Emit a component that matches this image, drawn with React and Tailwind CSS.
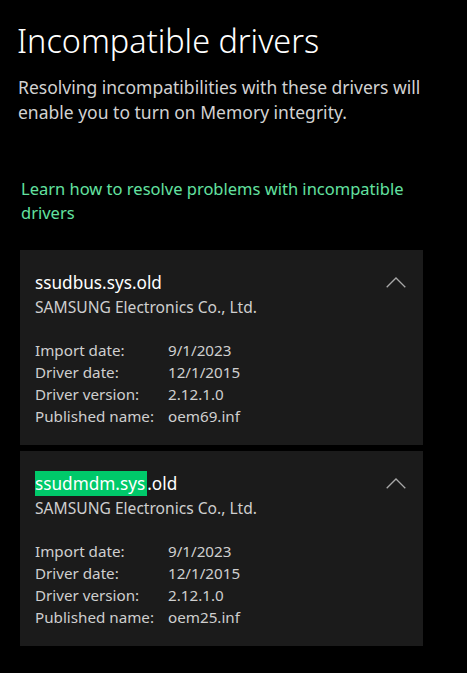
const drivers = [
  {
    file: 'ssudbus.sys.old',
    vendor: 'SAMSUNG Electronics Co., Ltd.',
    rows: [
      ['Import date:', '9/1/2023'],
      ['Driver date:', '12/1/2015'],
      ['Driver version:', '2.12.1.0'],
      ['Published name:', 'oem69.inf'],
    ],
  },
  {
    file: 'ssudmdm.sys.old',
    highlight: 'ssudmdm.sys',
    vendor: 'SAMSUNG Electronics Co., Ltd.',
    rows: [
      ['Import date:', '9/1/2023'],
      ['Driver date:', '12/1/2015'],
      ['Driver version:', '2.12.1.0'],
      ['Published name:', 'oem25.inf'],
    ],
  },
];

const Chevron = () => (
  <svg width="20" height="11" viewBox="0 0 20 11" fill="none" className="shrink-0">
    <path d="M0.7 10.3 L10 1 L19.3 10.3" stroke="#a8a8a8" strokeWidth="1.3" />
  </svg>
);

const DriverCard = ({ driver }) => {
  const rest = driver.highlight ? driver.file.slice(driver.highlight.length) : driver.file;
  return (
    <div className="bg-[#1b1b1b] pt-5 pb-[18px] pl-[15px] pr-[17px]">
      <div className="flex items-center justify-between">
        <div className="text-[17.2px] leading-[25px] text-white">
          {driver.highlight && <span className="bg-[#00c96a] inline-block pr-[2px]">{driver.highlight}</span>}
          {rest}
        </div>
        <Chevron />
      </div>
      <div className="text-[15.6px] leading-[24px] text-[#cfcfcf]">{driver.vendor}</div>
      <div className="mt-5 text-[15.2px] leading-[22px] text-[#cfcfcf]">
        {driver.rows.map(([label, value]) => (
          <div key={label} className="flex">
            <div className="w-[133px] shrink-0">{label}</div>
            <div>{value}</div>
          </div>
        ))}
      </div>
    </div>
  );
};

export default function App() {
  return (
    <div
      className="min-h-[673px] w-[467px] bg-black pt-5 pb-6"
      style={{ fontFamily: '"Noto Sans", "Open Sans", sans-serif' }}
    >
      <h1 className="px-[17px] text-[32.4px] leading-[40px] font-light text-white">Incompatible drivers</h1>
      <p className="mt-[15px] px-[18px] text-[17.5px] leading-[25px] text-[#d2d2d2]">
        Resolving incompatibilities with these drivers will enable you to turn on Memory integrity.
      </p>
      <a className="mt-[52px] block pl-[21px] pr-[50px] text-[16.5px] leading-[24px] text-[#63e2a0]">
        Learn how to resolve problems with incompatible drivers
      </a>
      <div className="mt-[25px] ml-5 w-[403px] flex flex-col gap-[6px]">
        {drivers.map((d) => (
          <DriverCard key={d.file} driver={d} />
        ))}
      </div>
    </div>
  );
}
